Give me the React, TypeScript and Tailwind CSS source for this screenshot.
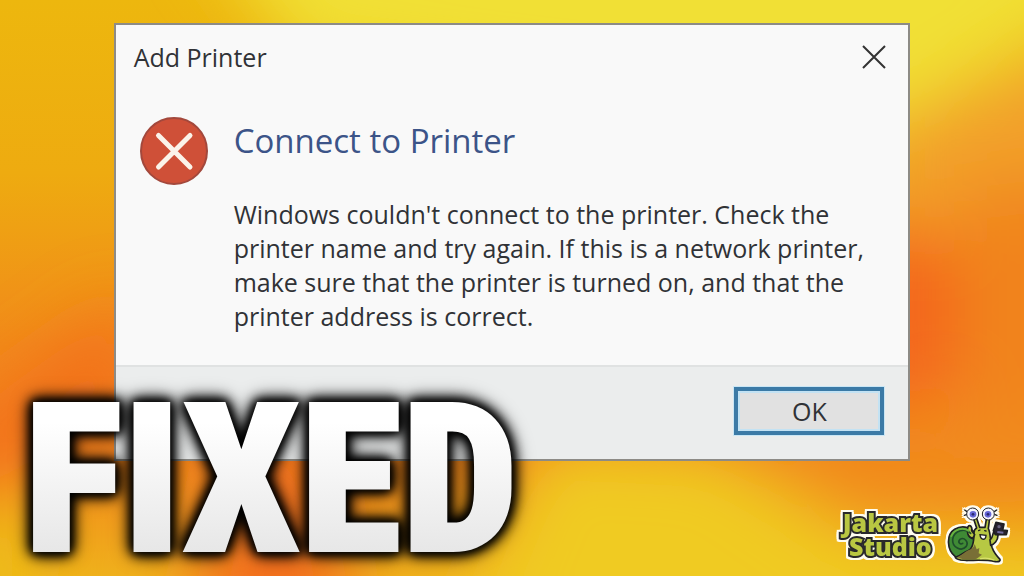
const sticker =
  '[filter:drop-shadow(2px_0_0_#fffdf0)_drop-shadow(-2px_0_0_#fffdf0)_drop-shadow(0_2px_0_#fffdf0)_drop-shadow(0_-2px_0_#fffdf0)]';

function ErrorIcon() {
  return (
    <svg viewBox="0 0 68 68" className="size-[68px] shrink-0" role="img" aria-label="Error">
      <circle cx="34" cy="34" r="33" fill="#cf5038" stroke="#a3483c" strokeWidth="2" />
      <path d="M18.500 18.500 L50 50 M50 18.500 L18.500 50" stroke="#fbf3ea" strokeWidth="5" strokeLinecap="round" />
    </svg>
  );
}

function Snail() {
  return (
    <svg viewBox="0 0 198 204" className={`h-[68px] w-[66px] overflow-visible ${sticker}`} role="img" aria-label="Snail mascot">
      <g stroke="#1f1f22" strokeWidth="5" strokeLinejoin="round" strokeLinecap="round">
        <path d="M28 170 C2 150 0 104 26 88 C48 74 84 80 90 110 L96 174 C70 184 44 182 28 170Z" fill="#3f8a35" />
        <path
          d="M28 172 C44 168 50 158 66 152 C82 146 84 120 84 98 C84 90 88 86 92 84 L82 54 L91 52 L101 82 L117 82 L122 52 L131 54 L127 86 C134 98 132 122 138 142 C144 160 152 168 162 178 C164 184 158 186 148 185 C110 176 70 184 44 180 C34 178 28 176 28 172Z"
          fill="#b7c843"
        />
        <path d="M80 116 C66 112 60 94 66 80 C72 72 80 82 77 92 L86 104Z" fill="#b7c843" />
        <path d="M134 136 C144 134 156 122 156 106 L144 94 C138 104 142 112 132 120Z" fill="#b7c843" />
        <path d="M150 67 L174 72 L170 90 L184 92 L181 104 L148 104 L142 92Z" fill="#28232f" />
      </g>
      <path d="M34 172 C48 166 54 156 68 150 C82 146 84 138 86 132 L92 148 L100 144 L98 160 L108 164 L92 176 C72 180 48 180 34 172Z" fill="#796f36" />
      <path d="M74 100 C58 82 24 90 20 118 C18 142 46 156 60 140 C70 126 54 110 42 118 C34 126 42 136 50 130" fill="none" stroke="#1f4d2b" strokeWidth="5" strokeLinecap="round" />
      <path d="M68 92 C50 80 24 88 16 108" fill="none" stroke="#69b23f" strokeWidth="6" strokeLinecap="round" />
      <path d="M102 104 L120 106 C120 122 104 122 102 104Z" fill="#fff" stroke="#1f1f22" strokeWidth="4" />
      <path d="M98 92 L102 90 M116 92 L120 93" stroke="#1f1f22" strokeWidth="4" strokeLinecap="round" />
      <path d="M104 176 C120 172 134 176 144 180" fill="none" stroke="#dbe36c" strokeWidth="4" strokeLinecap="round" />
      <path d="M62 34 L56 30 M61 44 L55 46 M146 34 L152 30 M147 44 L153 46" stroke="#1f1f22" strokeWidth="4" strokeLinecap="round" />
      <circle cx="80" cy="42" r="18" fill="#f6f6fc" stroke="#1f1f22" strokeWidth="3" />
      <circle cx="127" cy="42" r="18" fill="#f6f6fc" stroke="#1f1f22" strokeWidth="3" />
      <circle cx="81" cy="43" r="10" fill="#6667d6" />
      <circle cx="126" cy="43" r="10" fill="#6667d6" />
      <circle cx="81" cy="43" r="4" fill="#292a70" />
      <circle cx="126" cy="43" r="4" fill="#292a70" />
      <circle cx="159" cy="80" r="5" fill="#67637e" />
      <path d="M154 96 L172 98" stroke="#716ca0" strokeWidth="6" />
    </svg>
  );
}

function Backdrop() {
  return (
    <svg viewBox="0 0 1024 576" preserveAspectRatio="none" className="absolute inset-0 -z-10 h-full w-full" aria-hidden="true">
      <defs>
        <filter id="soft" x="-30%" y="-30%" width="160%" height="160%">
          <feGaussianBlur stdDeviation="34" />
        </filter>
        <linearGradient id="base" x1="0" y1="0" x2="0" y2="1">
          <stop offset="0" stopColor="#edb70e" />
          <stop offset="0.3" stopColor="#eeab10" />
          <stop offset="0.6" stopColor="#f18a1a" />
          <stop offset="0.8" stopColor="#f2861c" />
          <stop offset="1" stopColor="#efb01c" />
        </linearGradient>
      </defs>
      <rect width="1024" height="576" fill="url(#base)" />
      <g filter="url(#soft)">
        <path d="M200 -80 L1140 -80 L1120 0 L960 85 L880 130 L300 60Z" fill="#f1e034" />
        <path d="M880 120 L1120 40 L1120 230 L880 240Z" fill="#f2a02a" />
        <path d="M860 210 L955 250 L955 380 L860 430Z" fill="#f4641a" />
        <path d="M955 190 L1120 170 L1120 500 L955 480Z" fill="#f1841a" />
        <path d="M-80 450 L130 300 L140 420 L-80 500Z" fill="#f3701f" />
        <path d="M-80 540 L50 500 L20 660 L-80 660Z" fill="#eebc14" />
        <path d="M180 660 L230 430 L320 430 L360 660Z" fill="#f3701c" />
        <path d="M450 660 L540 440 L720 450 L860 545 L1120 555 L1120 660Z" fill="#f0cb22" />
        <path d="M780 420 L1120 420 L1120 490 L830 500Z" fill="#f18c1c" />
      </g>
    </svg>
  );
}

export default function App() {
  return (
    <main className="relative isolate min-h-screen overflow-hidden px-[11.1%] pt-[23px] font-['Open_Sans','Noto_Sans',sans-serif] text-[#303236]">
      <Backdrop />

      <section role="dialog" aria-labelledby="dialog-title" className="border-2 border-[#8d8b86] bg-[#f9f9f9]">
        <header className="flex h-16 items-center justify-between pr-5 pl-[18px]">
          <h1 id="dialog-title" className="text-[25px] leading-8">Add Printer</h1>
          <button type="button" aria-label="Close" className="flex size-7 items-center justify-center">
            <svg viewBox="0 0 24 24" className="size-6" fill="none" stroke="#333" strokeWidth="2">
              <path d="M1 1 L23 23 M23 1 L1 23" />
            </svg>
          </button>
        </header>

        <div className="flex gap-[26px] pt-7 pr-6 pb-8 pl-6">
          <ErrorIcon />
          <div className="min-w-0">
            <h2 className="text-[33px] leading-[48px] text-[#3c5488]">Connect to Printer</h2>
            <p className="mt-8 text-[25px] leading-[34px]">
              Windows couldn't connect to the printer. Check the
              <br />
              printer name and try again. If this is a network printer,
              <br />
              make sure that the printer is turned on, and that the
              <br />
              printer address is correct.
            </p>
          </div>
        </div>

        <footer className="flex justify-end border-t-2 border-[#e0e2e2] bg-[#ebeded] px-6 pt-5 pb-6">
          <button
            type="button"
            className="h-12 w-[150px] border-4 border-[#3b7aa6] bg-[#e1e1e1] text-[25px] leading-8 shadow-[inset_0_0_0_2px_#c3e2f3,0_0_0_1px_#c9e6f5]"
          >
            OK
          </button>
        </footer>
      </section>

      <p className="absolute bottom-0 left-5 bg-gradient-to-b from-white from-20% to-[#e6e6e6] to-90% bg-clip-text px-1 font-['Roboto_Condensed','Liberation_Sans',sans-serif] text-[208px] leading-[192px] font-black text-transparent [-webkit-text-stroke:2px_transparent] [filter:drop-shadow(0_0_4px_#000)_drop-shadow(0_0_6px_#000)_drop-shadow(0_0_7px_#000)]">
        FIXED
      </p>

      <div className="absolute right-3 bottom-2 flex items-center gap-2">
        <p
          className={`text-center text-[25px] leading-6 font-extrabold text-[#b9c742] [-webkit-text-stroke:4px_#29292b] [paint-order:stroke_fill] ${sticker}`}
        >
          Jakarta
          <br />
          Studio
        </p>
        <Snail />
      </div>
    </main>
  );
}
